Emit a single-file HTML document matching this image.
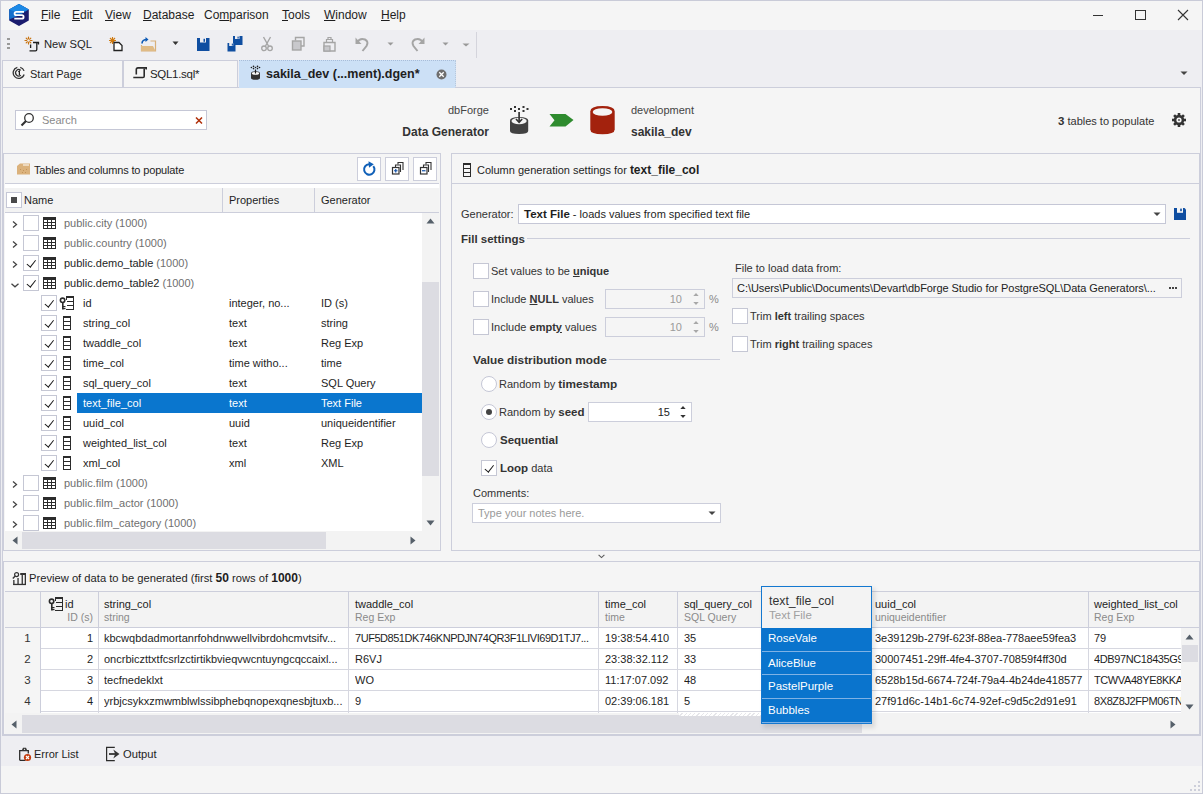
<!DOCTYPE html>
<html><head><meta charset="utf-8">
<style>
*{box-sizing:border-box;margin:0;padding:0}
html,body{width:1203px;height:794px;overflow:hidden;background:#f5f5f5;font-family:"Liberation Sans",sans-serif;font-size:11px;color:#1e1e1e}
.a{position:absolute}
.t{position:absolute;white-space:nowrap;line-height:14px}
.b{font-weight:bold}
.u{text-decoration:underline}
.cb{position:absolute;width:16px;height:16px;border:1px solid #c5c7d4;background:#fff}
.ck::after{content:"";position:absolute;left:5px;top:2px;width:3.5px;height:7.5px;border:solid #1a1a1a;border-width:0 1.3px 1.3px 0;transform:rotate(38deg)}
.hl{position:absolute;background:#ccceDB}
</style></head><body>
<!-- outer frame -->
<div class="a" style="left:0;top:0;width:1203px;height:794px;border:1px solid #c9cbd8"></div>

<!-- TITLE BAR -->
<div id="title" class="a" style="left:1px;top:1px;width:1201px;height:29px;background:#f5f5f5"></div>
<!-- TOOLBAR -->
<div id="toolbar" class="a" style="left:1px;top:30px;width:1201px;height:30px;background:#eeeef2"></div>
<!-- TAB STRIP -->
<div id="tabs" class="a" style="left:1px;top:60px;width:1201px;height:28px;background:#eeeef2"></div>


<!-- logo -->
<svg class="a" style="left:9px;top:4px" width="20" height="22" viewBox="0 0 20 22">
<polygon points="10,0 19.8,5.6 19.8,16.4 10,22 0.2,16.4 0.2,5.6" fill="#1b1c6e"/>
<polygon points="10,0 19.8,5.6 10,11.5 0.2,15.5 0.2,5.6" fill="#1570cc"/>
<polygon points="10,0 19.8,5.6 10,9 0.2,5.6" fill="#1d8ae6"/>
<path d="M15 7.8H7.3Q5.6 7.8 5.6 9.5Q5.6 11.2 7.3 11.2H12.9Q14.6 11.2 14.6 12.9Q14.6 14.6 12.9 14.6H5.3" stroke="#fff" stroke-width="1.8" fill="none"/>
</svg>
<div class="t" style="left:41px;top:8px;font-size:12px;color:#1e1e1e"><span class="u">F</span>ile</div>
<div class="t" style="left:72px;top:8px;font-size:12px"><span class="u">E</span>dit</div>
<div class="t" style="left:105px;top:8px;font-size:12px"><span class="u">V</span>iew</div>
<div class="t" style="left:143px;top:8px;font-size:12px"><span class="u">D</span>atabase</div>
<div class="t" style="left:204px;top:8px;font-size:12px">Co<span class="u">m</span>parison</div>
<div class="t" style="left:282px;top:8px;font-size:12px"><span class="u">T</span>ools</div>
<div class="t" style="left:324px;top:8px;font-size:12px"><span class="u">W</span>indow</div>
<div class="t" style="left:381px;top:8px;font-size:12px"><span class="u">H</span>elp</div>
<!-- window controls -->
<div class="a" style="left:1093px;top:15px;width:10px;height:1px;background:#333"></div>
<div class="a" style="left:1135px;top:10px;width:11px;height:10px;border:1px solid #333"></div>
<svg class="a" style="left:1177px;top:9px" width="12" height="12" viewBox="0 0 12 12"><path d="M1 1L11 11M11 1L1 11" stroke="#333" stroke-width="1.1"/></svg>

<!-- toolbar -->
<div class="a" style="left:7px;top:38px;width:3px;height:2px;background:#999"></div>
<div class="a" style="left:7px;top:43px;width:3px;height:2px;background:#999"></div>
<div class="a" style="left:7px;top:47px;width:3px;height:2px;background:#999"></div>
<svg class="a" style="left:20px;top:32px" width="24" height="24" viewBox="0 0 24 24">
<g stroke="#c8720f" stroke-width="1.2" stroke-linecap="round"><path d="M8.5 5v7M5 8.5h7M6.2 6.2l4.6 4.6M10.8 6.2l-4.6 4.6"/></g><circle cx="8.5" cy="8.5" r="1.3" fill="#eeeef2"/>
<path d="M13 10.5H18.5V12.5M16.8 10.8V17.5Q16.8 18.8 15.5 18.8H9.5M10.6 12.6V16" stroke="#1e1e1e" stroke-width="1.3" fill="none"/>
</svg>
<div class="t" style="left:44px;top:37px;font-size:11.2px">New SQL</div>
<svg class="a" style="left:108px;top:36px" width="16" height="16" viewBox="0 0 16 16">
<g stroke="#d07a10" stroke-width="1.1"><path d="M4.5 1v7M1 4.5h7M2 2l5 5M7 2l-5 5"/></g>
<path d="M6 6.5h5l3 3v5h-8z" stroke="#222" stroke-width="1.3" fill="#fff"/>
</svg>
<svg class="a" style="left:140px;top:36px" width="17" height="16" viewBox="0 0 17 16">
<path d="M1.5 9v6h14v-10h-5" stroke="#d8b07a" stroke-width="1.2" fill="none"/>
<path d="M1 10h12l2.5 5h-14.5z" fill="#e0bb86"/>
<path d="M2 7.5q0-4 5-4" stroke="#0d5ab5" stroke-width="1.6" fill="none"/><path d="M5.5 1l3 2.5l-3 2.5z" fill="#0d5ab5"/>
</svg>
<svg class="a" style="left:172px;top:41px" width="7" height="5"><path d="M0.5 0.5h6l-3 3.5z" fill="#333"/></svg>
<svg class="a" style="left:197px;top:38px" width="13" height="13" viewBox="0 0 13 13"><path d="M0 0h12.5v13h-12.5z" fill="#0f4ea1"/><rect x="3" y="0" width="6" height="4.5" fill="#eeeef2"/><rect x="6.5" y="0.8" width="1.5" height="3" fill="#0f4ea1"/></svg>
<svg class="a" style="left:227px;top:36px" width="16" height="16" viewBox="0 0 16 16"><path d="M6 0h9.5v9h-9.5z" fill="#0f4ea1"/><rect x="8" y="0" width="4.5" height="3" fill="#eeeef2"/><rect x="10.5" y="0.6" width="1.2" height="2" fill="#0f4ea1"/><path d="M0.5 7h8v8.5h-8z" fill="#0f4ea1"/><rect x="2.2" y="7" width="4" height="3" fill="#eeeef2"/><rect x="4.8" y="7.6" width="1.1" height="2" fill="#0f4ea1"/></svg>
<svg class="a" style="left:260px;top:36px" width="15" height="16" viewBox="0 0 15 16"><path d="M3.5 1l5 9M10.5 1l-5 9" stroke="#a5a5a5" stroke-width="1.4" fill="none"/><circle cx="4" cy="12.3" r="2.3" stroke="#a5a5a5" stroke-width="1.3" fill="none"/><circle cx="10" cy="12.3" r="2.3" stroke="#a5a5a5" stroke-width="1.3" fill="none"/></svg>
<svg class="a" style="left:291px;top:36px" width="15" height="16" viewBox="0 0 15 16"><path d="M4.5 4.5v-3h8.5v8.5h-3" stroke="#a5a5a5" stroke-width="1.4" fill="none"/><rect x="1.5" y="5" width="8.5" height="9" stroke="#a5a5a5" stroke-width="1.4" fill="#c8c8cc"/></svg>
<svg class="a" style="left:322px;top:36px" width="15" height="16" viewBox="0 0 15 16"><path d="M2 6.5h11v8.5h-11z" stroke="#a5a5a5" stroke-width="1.4" fill="none"/><path d="M4.5 6.5v-3h6v3M6 3.5v-2h3v2" stroke="#a5a5a5" stroke-width="1.2" fill="none"/><rect x="2" y="10" width="6" height="5" stroke="#a5a5a5" stroke-width="1.2" fill="#c8c8cc"/></svg>
<svg class="a" style="left:355px;top:36px" width="15" height="16" viewBox="0 0 15 16"><path d="M2 6.5q3-5 8-3q4 2 1.5 6.5l-4 5" stroke="#a5a5a5" stroke-width="2" fill="none"/><path d="M0.5 1.5v6.5h6z" fill="#a5a5a5"/></svg>
<svg class="a" style="left:387px;top:42px" width="7" height="4"><path d="M0.5 0.5h6l-3 3z" fill="#999"/></svg>
<svg class="a" style="left:410px;top:36px" width="16" height="16" viewBox="0 0 16 16"><path d="M13 6.5q-3-5-8-3q-4 2-1.5 6.5l4 5" stroke="#a5a5a5" stroke-width="2" fill="none"/><path d="M14.5 1.5v6.5h-6z" fill="#a5a5a5"/></svg>
<svg class="a" style="left:442px;top:42px" width="7" height="4"><path d="M0.5 0.5h6l-3 3z" fill="#999"/></svg>
<svg class="a" style="left:462px;top:43px" width="8" height="4"><path d="M0.5 0.5h7l-3.5 3z" fill="#999"/></svg>
<div class="a" style="left:476px;top:32px;width:1px;height:26px;background:#d4d4dc"></div>

<!-- tabs -->
<div class="a" style="left:2px;top:60px;width:121px;height:28px;background:#f5f5f5;border:1px solid #ccceDB"></div>
<div class="a" style="left:123px;top:60px;width:115px;height:28px;background:#f5f5f5;border:1px solid #ccceDB"></div>
<div class="a" style="left:239px;top:60px;width:217px;height:28px;background:#cce0f6;border-top:1px dotted #a8bcd8;border-right:1px dotted #b8c8dc"></div>
<div class="a" style="left:2px;top:87px;width:1199px;height:1px;background:#ccceDB"></div>
<div class="a" style="left:239px;top:87px;width:216px;height:1px;background:#cce0f6"></div>
<svg class="a" style="left:12px;top:66px" width="14" height="14" viewBox="0 0 14 14"><path d="M8.25 1.39A5.6 5.6 0 0 1 12.06 4.88M12.13 8.53A5.6 5.6 0 1 1 5.35 1.39" stroke="#333" stroke-width="1.3" fill="none"/><path d="M8.86 9.25A3.2 3.2 0 1 1 8.86 4.35" stroke="#333" stroke-width="1.2" fill="none"/><path d="M6.3 5.7L7.4 5V9" stroke="#222" stroke-width="1.2" fill="none"/></svg>
<div class="t" style="left:30px;top:67px;font-size:11px">Start Page</div>
<svg class="a" style="left:132px;top:65px" width="15" height="17" viewBox="0 0 15 17"><path d="M4.3 9.5V4.6Q4.3 2.9 6 2.9H14.3V4.6" stroke="#2b2b2b" stroke-width="1.6" fill="none"/><path d="M12.2 3.5V11.2Q12.2 12.5 10.9 12.5H1.3" stroke="#2b2b2b" stroke-width="1.6" fill="none"/></svg>
<div class="t" style="left:150px;top:67px;font-size:11.5px;letter-spacing:-0.3px">SQL1.sql*</div>
<svg class="a" style="left:249px;top:64px" width="13" height="18" viewBox="0 0 13 18">
<g fill="#1e1e1e"><circle cx="4.5" cy="2.4" r="0.8"/><circle cx="8.5" cy="2.4" r="0.8"/><circle cx="2.4" cy="3.5" r="0.8"/><circle cx="6.5" cy="3.5" r="0.8"/><circle cx="10.5" cy="3.5" r="0.8"/><circle cx="4.5" cy="4.6" r="0.8"/><circle cx="8.5" cy="4.6" r="0.8"/></g>
<path d="M2 9.3Q2 7.3 6.5 7.3Q11 7.3 11 9.3V14Q11 15.8 6.5 15.8Q2 15.8 2 14Z" fill="#333"/>
<ellipse cx="6.5" cy="9.4" rx="3.6" ry="1.3" fill="#fff"/>
<rect x="5.9" y="5.5" width="1.2" height="4" fill="#1e1e1e"/>
</svg>
<div class="t b" style="left:266px;top:67px;font-size:12.5px;color:#1e1e1e">sakila_dev (...ment).dgen*</div>
<svg class="a" style="left:436px;top:69px" width="11" height="11" viewBox="0 0 11 11"><circle cx="5.5" cy="5.5" r="5" fill="#6e6e6e"/><path d="M3.3 3.3l4.4 4.4M7.7 3.3l-4.4 4.4" stroke="#fff" stroke-width="1.3"/></svg>
<svg class="a" style="left:1180px;top:71px" width="8" height="5"><path d="M0.5 0.5h7l-3.5 3.5z" fill="#444"/></svg>

<!-- DOC AREA -->
<div id="doc" class="a" style="left:1px;top:88px;width:1201px;height:648px;background:#eeeef2"></div><div class="a" style="left:2px;top:88px;width:1199px;height:648px;background:#f5f5f5;border:1px solid #ccceDB;border-top:0"></div>



<!-- search -->
<div class="a" style="left:15px;top:110px;width:192px;height:20px;background:#fff;border:1px solid #c5c7d6"></div>
<svg class="a" style="left:20px;top:112px" width="15" height="15" viewBox="0 0 15 15"><circle cx="9" cy="6" r="4.3" fill="none" stroke="#333" stroke-width="1.3"/><path d="M6 9l-4.5 4.5" stroke="#333" stroke-width="2.2"/></svg>
<div class="t" style="left:42px;top:113px;font-size:11px;color:#8a8a8a">Search</div>
<svg class="a" style="left:195px;top:117px" width="8" height="7" viewBox="0 0 8 7"><path d="M1 0.5l6 6M7 0.5l-6 6" stroke="#b0300a" stroke-width="1.5"/></svg>
<!-- center header -->
<div class="t" style="left:448px;top:103px;color:#444;width:40px;text-align:right">dbForge</div>
<div class="t b" style="left:389px;top:125px;color:#333;font-size:12px;width:100px;text-align:right">Data Generator</div>
<svg class="a" style="left:509px;top:104px" width="21" height="32" viewBox="0 0 21 32">
<g fill="#333"><rect x="1" y="4" width="2" height="2"/><rect x="5" y="2" width="2" height="2"/><rect x="13.5" y="2" width="2" height="2"/><rect x="17.5" y="4" width="2" height="2"/><rect x="5" y="6" width="2" height="2"/><rect x="13.5" y="6" width="2" height="2"/><rect x="9" y="4" width="2" height="2"/></g>
<path d="M1 16.5Q1 13 10.2 13Q19.2 13 19.2 16.5V27Q19.2 30 10.2 30Q1 30 1 27Z" fill="#424242"/>
<ellipse cx="10.1" cy="17" rx="7.6" ry="3.2" fill="#f5f5f5"/>
<path d="M10.1 8v10" stroke="#333" stroke-width="1.7"/><path d="M7 15l3.1 3.3l3.1-3.3" stroke="#333" stroke-width="1.6" fill="none"/>
</svg>
<svg class="a" style="left:549px;top:114px" width="25" height="13" viewBox="0 0 25 13"><path d="M0.5 0h16l8 6l-8 6.5h-16l5-6.3z" fill="#2e8b2e"/></svg>
<svg class="a" style="left:590px;top:105px" width="25" height="30" viewBox="0 0 25 30"><path d="M0.3 6.5Q0.3 1 12.5 1Q24.7 1 24.7 6.5V24.5Q24.7 29.3 12.5 29.3Q0.3 29.3 0.3 24.5Z" fill="#a3220d"/><ellipse cx="12.5" cy="7" rx="9.8" ry="3.8" fill="#f5f5f5"/></svg>
<div class="t" style="left:631px;top:103px;color:#444">development</div>
<div class="t b" style="left:631px;top:125px;color:#333;font-size:12px">sakila_dev</div>
<div class="t" style="left:1058px;top:114px;color:#333;font-size:11px"><b style="font-size:11.5px">3</b> tables to populate</div>
<svg class="a" style="left:1171px;top:112px" width="16" height="16" viewBox="0 0 16 16"><g transform="translate(8 8)"><g fill="#333"><rect x="-1.3" y="-7" width="2.6" height="14"/><rect x="-1.3" y="-7" width="2.6" height="14" transform="rotate(45)"/><rect x="-1.3" y="-7" width="2.6" height="14" transform="rotate(90)"/><rect x="-1.3" y="-7" width="2.6" height="14" transform="rotate(135)"/></g><circle r="5.2" fill="#333"/><circle r="2.6" fill="#f5f5f5"/><circle r="1" fill="#555"/></g></svg>

<!-- LEFT PANEL -->
<div class="a" style="left:3px;top:153px;width:438px;height:398px;border:1px solid #ccceDB;background:#f5f5f5"></div>
<svg class="a" style="left:17px;top:163px" width="14" height="12" viewBox="0 0 14 12"><path d="M0 3l3-2.5h10v11h-13z" fill="#dbb27c"/><rect x="6" y="1.5" width="6" height="1" fill="#fff"/><g fill="#c4945a"><rect x="3" y="6" width="1" height="1"/><rect x="6" y="7" width="1" height="1"/><rect x="9" y="6" width="1" height="1"/><rect x="5" y="9" width="1" height="1"/><rect x="8" y="9" width="1" height="1"/></g></svg>
<div class="t" style="left:34px;top:163px;color:#1e1e1e;letter-spacing:-0.15px">Tables and columns to populate</div>
<div class="a" style="left:357px;top:157px;width:24px;height:24px;border:1px solid #ccceDB;background:#fff"></div>
<div class="a" style="left:385px;top:157px;width:24px;height:24px;border:1px solid #ccceDB;background:#fff"></div>
<div class="a" style="left:413px;top:157px;width:24px;height:24px;border:1px solid #ccceDB;background:#fff"></div>
<svg class="a" style="left:361px;top:160px" width="17" height="18" viewBox="0 0 17 18"><path d="M12.3 6.2A5.2 5.2 0 1 1 8 4.3" stroke="#1060b8" stroke-width="2" fill="none"/><path d="M7.5 1.2L12.8 4.2L8 7.8z" fill="#1060b8"/></svg>
<svg class="a" style="left:390px;top:160px" width="15" height="16" viewBox="0 0 15 16"><path d="M5.5 7.5V5H10.5V12" stroke="#333" stroke-width="1.1" fill="none"/><path d="M8 4.5V2.5H13V10" stroke="#333" stroke-width="1.1" fill="none"/><rect x="2.5" y="7.5" width="6.5" height="6.5" fill="#fff" stroke="#333" stroke-width="1.2"/><path d="M5.75 9v3.5M4 10.75h3.5" stroke="#1050a8" stroke-width="1.2"/></svg>
<svg class="a" style="left:418px;top:160px" width="15" height="16" viewBox="0 0 15 16"><path d="M5.5 7.5V5H10.5V12" stroke="#333" stroke-width="1.1" fill="none"/><path d="M8 4.5V2.5H13V10" stroke="#333" stroke-width="1.1" fill="none"/><rect x="2.5" y="7.5" width="6.5" height="6.5" fill="#fff" stroke="#333" stroke-width="1.2"/><path d="M4 10.75h3.5" stroke="#1050a8" stroke-width="1.2"/></svg>
<div class="a" style="left:5px;top:183px;width:434px;height:1px;background:#ccceDB"></div>
<!-- column header -->
<div class="a" style="left:5px;top:184px;width:434px;height:28px;background:#f3f3f3;border-top:4px solid #fff"></div>
<div class="a" style="left:5px;top:212px;width:434px;height:1px;background:#ccceDB"></div>
<div class="a" style="left:6px;top:192px;width:16px;height:16px;border:1px solid #c5c7d6;background:#fff"></div>
<div class="a" style="left:11px;top:197px;width:6px;height:6px;background:#4a4a4a"></div>
<div class="t" style="left:24px;top:193px">Name</div>
<div class="a" style="left:222px;top:188px;width:1px;height:24px;background:#ccceDB"></div>
<div class="t" style="left:229px;top:193px">Properties</div>
<div class="a" style="left:314px;top:188px;width:1px;height:24px;background:#ccceDB"></div>
<div class="t" style="left:321px;top:193px">Generator</div>
<!-- tree body -->
<div class="a" style="left:5px;top:213px;width:417px;height:318px;background:#fff"></div>
<svg class="a" style="left:12px;top:221px" width="6" height="7" viewBox="0 0 6 7"><path d="M1 0.5l3.5 3l-3.5 3" stroke="#444" stroke-width="1.3" fill="none"/></svg>
<div class="cb" style="left:23px;top:215px"></div>
<svg class="a" style="left:43px;top:217px" width="13" height="12" viewBox="0 0 13 12"><rect width="13" height="12" fill="#2b2b2b"/><g fill="#fff"><rect x="1" y="3" width="3" height="2"/><rect x="5" y="3" width="3" height="2"/><rect x="9" y="3" width="3" height="2"/><rect x="1" y="6" width="3" height="2"/><rect x="5" y="6" width="3" height="2"/><rect x="9" y="6" width="3" height="2"/><rect x="1" y="9" width="3" height="2"/><rect x="5" y="9" width="3" height="2"/><rect x="9" y="9" width="3" height="2"/></g></svg>
<div class="t" style="left:64px;top:216px;color:#6f6f6f">public.city <span style="color:#6f6f6f">(1000)</span></div>
<svg class="a" style="left:12px;top:241px" width="6" height="7" viewBox="0 0 6 7"><path d="M1 0.5l3.5 3l-3.5 3" stroke="#444" stroke-width="1.3" fill="none"/></svg>
<div class="cb" style="left:23px;top:235px"></div>
<svg class="a" style="left:43px;top:237px" width="13" height="12" viewBox="0 0 13 12"><rect width="13" height="12" fill="#2b2b2b"/><g fill="#fff"><rect x="1" y="3" width="3" height="2"/><rect x="5" y="3" width="3" height="2"/><rect x="9" y="3" width="3" height="2"/><rect x="1" y="6" width="3" height="2"/><rect x="5" y="6" width="3" height="2"/><rect x="9" y="6" width="3" height="2"/><rect x="1" y="9" width="3" height="2"/><rect x="5" y="9" width="3" height="2"/><rect x="9" y="9" width="3" height="2"/></g></svg>
<div class="t" style="left:64px;top:236px;color:#6f6f6f">public.country <span style="color:#6f6f6f">(1000)</span></div>
<svg class="a" style="left:12px;top:261px" width="6" height="7" viewBox="0 0 6 7"><path d="M1 0.5l3.5 3l-3.5 3" stroke="#444" stroke-width="1.3" fill="none"/></svg>
<div class="cb ck" style="left:23px;top:255px"></div>
<svg class="a" style="left:43px;top:257px" width="13" height="12" viewBox="0 0 13 12"><rect width="13" height="12" fill="#2b2b2b"/><g fill="#fff"><rect x="1" y="3" width="3" height="2"/><rect x="5" y="3" width="3" height="2"/><rect x="9" y="3" width="3" height="2"/><rect x="1" y="6" width="3" height="2"/><rect x="5" y="6" width="3" height="2"/><rect x="9" y="6" width="3" height="2"/><rect x="1" y="9" width="3" height="2"/><rect x="5" y="9" width="3" height="2"/><rect x="9" y="9" width="3" height="2"/></g></svg>
<div class="t" style="left:64px;top:256px;color:#1e1e1e">public.demo_table <span style="color:#6f6f6f">(1000)</span></div>
<svg class="a" style="left:11px;top:283px" width="8" height="5" viewBox="0 0 8 5"><path d="M0.5 0.8l3.5 3l3.5-3" stroke="#444" stroke-width="1.3" fill="none"/></svg>
<div class="cb ck" style="left:23px;top:275px"></div>
<svg class="a" style="left:43px;top:277px" width="13" height="12" viewBox="0 0 13 12"><rect width="13" height="12" fill="#2b2b2b"/><g fill="#fff"><rect x="1" y="3" width="3" height="2"/><rect x="5" y="3" width="3" height="2"/><rect x="9" y="3" width="3" height="2"/><rect x="1" y="6" width="3" height="2"/><rect x="5" y="6" width="3" height="2"/><rect x="9" y="6" width="3" height="2"/><rect x="1" y="9" width="3" height="2"/><rect x="5" y="9" width="3" height="2"/><rect x="9" y="9" width="3" height="2"/></g></svg>
<div class="t" style="left:64px;top:276px;color:#1e1e1e">public.demo_table2 <span style="color:#6f6f6f">(1000)</span></div>
<div class="cb ck" style="left:41px;top:295px"></div>
<svg class="a" style="left:59px;top:296px" width="15" height="14" viewBox="0 0 15 14"><g fill="#2b2b2b"><rect x="7" y="0" width="8" height="2"/><rect x="14" y="0" width="1" height="14"/><rect x="7" y="13" width="8" height="1"/><rect x="8" y="5" width="7" height="1"/><rect x="8" y="9" width="7" height="1"/><rect x="7" y="0" width="1" height="4"/><rect x="3" y="6.5" width="1.6" height="7"/><rect x="4" y="10" width="2.5" height="1.2"/><rect x="4" y="12" width="2.5" height="1.2"/></g><circle cx="3.6" cy="4.3" r="2.2" fill="none" stroke="#2b2b2b" stroke-width="1.6"/></svg>
<div class="t" style="left:83px;top:296px;color:#1e1e1e">id</div>
<div class="t" style="left:229px;top:296px;color:#1e1e1e">integer, no...</div>
<div class="t" style="left:321px;top:296px;color:#1e1e1e">ID (s)</div>
<div class="cb ck" style="left:41px;top:315px"></div>
<svg class="a" style="left:63px;top:316px" width="8" height="14" viewBox="0 0 8 14"><g fill="#2b2b2b"><rect x="0" y="0" width="8" height="2"/><rect x="0" y="0" width="1" height="14"/><rect x="7" y="0" width="1" height="14"/><rect x="0" y="13" width="8" height="1"/><rect x="0" y="5" width="8" height="1"/><rect x="0" y="9" width="8" height="1"/></g></svg>
<div class="t" style="left:83px;top:316px;color:#1e1e1e">string_col</div>
<div class="t" style="left:229px;top:316px;color:#1e1e1e">text</div>
<div class="t" style="left:321px;top:316px;color:#1e1e1e">string</div>
<div class="cb ck" style="left:41px;top:335px"></div>
<svg class="a" style="left:63px;top:336px" width="8" height="14" viewBox="0 0 8 14"><g fill="#2b2b2b"><rect x="0" y="0" width="8" height="2"/><rect x="0" y="0" width="1" height="14"/><rect x="7" y="0" width="1" height="14"/><rect x="0" y="13" width="8" height="1"/><rect x="0" y="5" width="8" height="1"/><rect x="0" y="9" width="8" height="1"/></g></svg>
<div class="t" style="left:83px;top:336px;color:#1e1e1e">twaddle_col</div>
<div class="t" style="left:229px;top:336px;color:#1e1e1e">text</div>
<div class="t" style="left:321px;top:336px;color:#1e1e1e">Reg Exp</div>
<div class="cb ck" style="left:41px;top:355px"></div>
<svg class="a" style="left:63px;top:356px" width="8" height="14" viewBox="0 0 8 14"><g fill="#2b2b2b"><rect x="0" y="0" width="8" height="2"/><rect x="0" y="0" width="1" height="14"/><rect x="7" y="0" width="1" height="14"/><rect x="0" y="13" width="8" height="1"/><rect x="0" y="5" width="8" height="1"/><rect x="0" y="9" width="8" height="1"/></g></svg>
<div class="t" style="left:83px;top:356px;color:#1e1e1e">time_col</div>
<div class="t" style="left:229px;top:356px;color:#1e1e1e">time witho...</div>
<div class="t" style="left:321px;top:356px;color:#1e1e1e">time</div>
<div class="cb ck" style="left:41px;top:375px"></div>
<svg class="a" style="left:63px;top:376px" width="8" height="14" viewBox="0 0 8 14"><g fill="#2b2b2b"><rect x="0" y="0" width="8" height="2"/><rect x="0" y="0" width="1" height="14"/><rect x="7" y="0" width="1" height="14"/><rect x="0" y="13" width="8" height="1"/><rect x="0" y="5" width="8" height="1"/><rect x="0" y="9" width="8" height="1"/></g></svg>
<div class="t" style="left:83px;top:376px;color:#1e1e1e">sql_query_col</div>
<div class="t" style="left:229px;top:376px;color:#1e1e1e">text</div>
<div class="t" style="left:321px;top:376px;color:#1e1e1e">SQL Query</div>
<div class="cb ck" style="left:41px;top:395px"></div>
<svg class="a" style="left:63px;top:396px" width="8" height="14" viewBox="0 0 8 14"><g fill="#2b2b2b"><rect x="0" y="0" width="8" height="2"/><rect x="0" y="0" width="1" height="14"/><rect x="7" y="0" width="1" height="14"/><rect x="0" y="13" width="8" height="1"/><rect x="0" y="5" width="8" height="1"/><rect x="0" y="9" width="8" height="1"/></g></svg>
<div class="a" style="left:77px;top:393px;width:345px;height:20px;background:#0a76ce"></div>
<div class="t" style="left:83px;top:396px;color:#fff">text_file_col</div>
<div class="t" style="left:229px;top:396px;color:#fff">text</div>
<div class="t" style="left:321px;top:396px;color:#fff">Text File</div>
<div class="cb ck" style="left:41px;top:415px"></div>
<svg class="a" style="left:63px;top:416px" width="8" height="14" viewBox="0 0 8 14"><g fill="#2b2b2b"><rect x="0" y="0" width="8" height="2"/><rect x="0" y="0" width="1" height="14"/><rect x="7" y="0" width="1" height="14"/><rect x="0" y="13" width="8" height="1"/><rect x="0" y="5" width="8" height="1"/><rect x="0" y="9" width="8" height="1"/></g></svg>
<div class="t" style="left:83px;top:416px;color:#1e1e1e">uuid_col</div>
<div class="t" style="left:229px;top:416px;color:#1e1e1e">uuid</div>
<div class="t" style="left:321px;top:416px;color:#1e1e1e">uniqueidentifier</div>
<div class="cb ck" style="left:41px;top:435px"></div>
<svg class="a" style="left:63px;top:436px" width="8" height="14" viewBox="0 0 8 14"><g fill="#2b2b2b"><rect x="0" y="0" width="8" height="2"/><rect x="0" y="0" width="1" height="14"/><rect x="7" y="0" width="1" height="14"/><rect x="0" y="13" width="8" height="1"/><rect x="0" y="5" width="8" height="1"/><rect x="0" y="9" width="8" height="1"/></g></svg>
<div class="t" style="left:83px;top:436px;color:#1e1e1e">weighted_list_col</div>
<div class="t" style="left:229px;top:436px;color:#1e1e1e">text</div>
<div class="t" style="left:321px;top:436px;color:#1e1e1e">Reg Exp</div>
<div class="cb ck" style="left:41px;top:455px"></div>
<svg class="a" style="left:63px;top:456px" width="8" height="14" viewBox="0 0 8 14"><g fill="#2b2b2b"><rect x="0" y="0" width="8" height="2"/><rect x="0" y="0" width="1" height="14"/><rect x="7" y="0" width="1" height="14"/><rect x="0" y="13" width="8" height="1"/><rect x="0" y="5" width="8" height="1"/><rect x="0" y="9" width="8" height="1"/></g></svg>
<div class="t" style="left:83px;top:456px;color:#1e1e1e">xml_col</div>
<div class="t" style="left:229px;top:456px;color:#1e1e1e">xml</div>
<div class="t" style="left:321px;top:456px;color:#1e1e1e">XML</div>
<svg class="a" style="left:12px;top:481px" width="6" height="7" viewBox="0 0 6 7"><path d="M1 0.5l3.5 3l-3.5 3" stroke="#444" stroke-width="1.3" fill="none"/></svg>
<div class="cb" style="left:23px;top:475px"></div>
<svg class="a" style="left:43px;top:477px" width="13" height="12" viewBox="0 0 13 12"><rect width="13" height="12" fill="#2b2b2b"/><g fill="#fff"><rect x="1" y="3" width="3" height="2"/><rect x="5" y="3" width="3" height="2"/><rect x="9" y="3" width="3" height="2"/><rect x="1" y="6" width="3" height="2"/><rect x="5" y="6" width="3" height="2"/><rect x="9" y="6" width="3" height="2"/><rect x="1" y="9" width="3" height="2"/><rect x="5" y="9" width="3" height="2"/><rect x="9" y="9" width="3" height="2"/></g></svg>
<div class="t" style="left:64px;top:476px;color:#6f6f6f">public.film <span style="color:#6f6f6f">(1000)</span></div>
<svg class="a" style="left:12px;top:501px" width="6" height="7" viewBox="0 0 6 7"><path d="M1 0.5l3.5 3l-3.5 3" stroke="#444" stroke-width="1.3" fill="none"/></svg>
<div class="cb" style="left:23px;top:495px"></div>
<svg class="a" style="left:43px;top:497px" width="13" height="12" viewBox="0 0 13 12"><rect width="13" height="12" fill="#2b2b2b"/><g fill="#fff"><rect x="1" y="3" width="3" height="2"/><rect x="5" y="3" width="3" height="2"/><rect x="9" y="3" width="3" height="2"/><rect x="1" y="6" width="3" height="2"/><rect x="5" y="6" width="3" height="2"/><rect x="9" y="6" width="3" height="2"/><rect x="1" y="9" width="3" height="2"/><rect x="5" y="9" width="3" height="2"/><rect x="9" y="9" width="3" height="2"/></g></svg>
<div class="t" style="left:64px;top:496px;color:#6f6f6f">public.film_actor <span style="color:#6f6f6f">(1000)</span></div>
<svg class="a" style="left:12px;top:521px" width="6" height="7" viewBox="0 0 6 7"><path d="M1 0.5l3.5 3l-3.5 3" stroke="#444" stroke-width="1.3" fill="none"/></svg>
<div class="cb" style="left:23px;top:515px"></div>
<svg class="a" style="left:43px;top:517px" width="13" height="12" viewBox="0 0 13 12"><rect width="13" height="12" fill="#2b2b2b"/><g fill="#fff"><rect x="1" y="3" width="3" height="2"/><rect x="5" y="3" width="3" height="2"/><rect x="9" y="3" width="3" height="2"/><rect x="1" y="6" width="3" height="2"/><rect x="5" y="6" width="3" height="2"/><rect x="9" y="6" width="3" height="2"/><rect x="1" y="9" width="3" height="2"/><rect x="5" y="9" width="3" height="2"/><rect x="9" y="9" width="3" height="2"/></g></svg>
<div class="t" style="left:64px;top:516px;color:#6f6f6f">public.film_category <span style="color:#6f6f6f">(1000)</span></div>
<!-- v scroll -->
<div class="a" style="left:422px;top:213px;width:17px;height:318px;background:#f3f3f3"></div>
<svg class="a" style="left:426px;top:218px" width="9" height="6"><path d="M0.5 5.5l4-5l4 5z" fill="#56606a"/></svg>
<div class="a" style="left:422px;top:282px;width:17px;height:194px;background:#dcdce2"></div>
<svg class="a" style="left:426px;top:520px" width="9" height="6"><path d="M0.5 0.5l4 5l4-5z" fill="#56606a"/></svg>
<!-- h scroll -->
<div class="a" style="left:5px;top:531px;width:434px;height:19px;background:#f3f3f3"></div>
<svg class="a" style="left:12px;top:536px" width="6" height="9"><path d="M5.5 0.5l-5 4l5 4z" fill="#56606a"/></svg>
<div class="a" style="left:22px;top:532px;width:304px;height:17px;background:#dcdce2"></div>
<svg class="a" style="left:410px;top:536px" width="6" height="9"><path d="M0.5 0.5l5 4l-5 4z" fill="#56606a"/></svg>


<!-- RIGHT PANEL -->
<div class="a" style="left:451px;top:153px;width:749px;height:398px;border:1px solid #ccceDB;background:#f5f5f5"></div>
<svg class="a" style="left:463px;top:163px" width="8" height="14" viewBox="0 0 8 14"><g fill="#2b2b2b"><rect x="0" y="0" width="8" height="2"/><rect x="0" y="0" width="1" height="14"/><rect x="7" y="0" width="1" height="14"/><rect x="0" y="13" width="8" height="1"/><rect x="0" y="5" width="8" height="1"/><rect x="0" y="9" width="8" height="1"/></g></svg>
<div class="t" style="left:477px;top:163px">Column generation settings for <b style="font-size:12px">text_file_col</b></div>
<div class="a" style="left:452px;top:183px;width:747px;height:1px;background:#ccceDB"></div>
<div class="t" style="left:461px;top:207px;color:#333">Generator:</div>
<div class="a" style="left:518px;top:204px;width:648px;height:20px;background:#fff;border:1px solid #c5c7d6"></div>
<div class="t" style="left:524px;top:207px"><b style="font-size:11.5px">Text File</b> - loads values from specified text file</div>
<svg class="a" style="left:1153px;top:212px" width="8" height="5"><path d="M0.5 0.5h7l-3.5 3.5z" fill="#444"/></svg>
<svg class="a" style="left:1174px;top:208px" width="12" height="12" viewBox="0 0 12 12"><path d="M0 0H10.5L12 1.5V12H0z" fill="#0f4ea1"/><rect x="3" y="0" width="6" height="4.8" fill="#f5f5f5"/><rect x="6.2" y="0.6" width="1.6" height="2.6" fill="#0f4ea1"/></svg>
<div class="t b" style="left:461px;top:232px;color:#333;font-size:11.5px">Fill settings</div>
<div class="a" style="left:527px;top:238px;width:663px;height:1px;background:#ccceDB"></div>

<div class="cb" style="left:473px;top:263px"></div>
<div class="t" style="left:491px;top:264px;color:#333">Set values to be <b><span class="u">u</span>nique</b></div>
<div class="cb" style="left:473px;top:291px"></div>
<div class="t" style="left:491px;top:292px;color:#333">Include <b class="u">N</b><b>ULL</b> values</div>
<div class="cb" style="left:473px;top:319px"></div>
<div class="t" style="left:491px;top:320px;color:#333">Include <b>empt<span class="u">y</span></b> values</div>
<div class="a" style="left:605px;top:289px;width:100px;height:20px;border:1px solid #ccceDB"></div>
<div class="t" style="left:640px;top:292px;width:42px;text-align:right;color:#9a9a9a">10</div>
<svg class="a" style="left:693px;top:292px" width="6" height="14"><path d="M0.3 4L3 1L5.7 4z M0.3 10L3 13L5.7 10z" fill="#a8a8a8"/></svg>
<div class="t" style="left:709px;top:292px;color:#8a8a8a">%</div>
<div class="a" style="left:605px;top:317px;width:100px;height:20px;border:1px solid #ccceDB"></div>
<div class="t" style="left:640px;top:320px;width:42px;text-align:right;color:#9a9a9a">10</div>
<svg class="a" style="left:693px;top:320px" width="6" height="14"><path d="M0.3 4L3 1L5.7 4z M0.3 10L3 13L5.7 10z" fill="#a8a8a8"/></svg>
<div class="t" style="left:709px;top:320px;color:#8a8a8a">%</div>

<div class="t" style="left:735px;top:261px;color:#333">File to load data from:</div>
<div class="a" style="left:732px;top:278px;width:450px;height:20px;background:#f5f5f5;border:1px solid #ccceDB"></div>
<div class="t" style="left:737px;top:281px;color:#222;font-size:11px;letter-spacing:-0.06px">C:\Users\Public\Documents\Devart\dbForge Studio for PostgreSQL\Data Generators\...</div>
<div class="a" style="left:1169px;top:287px;width:2px;height:2px;background:#444"></div><div class="a" style="left:1172px;top:287px;width:2px;height:2px;background:#444"></div><div class="a" style="left:1175px;top:287px;width:2px;height:2px;background:#444"></div>
<div class="cb" style="left:732px;top:308px"></div>
<div class="t" style="left:750px;top:309px;color:#333">Trim <b>left</b> trailing spaces</div>
<div class="cb" style="left:732px;top:336px"></div>
<div class="t" style="left:750px;top:337px;color:#333">Trim <b>right</b> trailing spaces</div>

<div class="t b" style="left:473px;top:353px;color:#333;font-size:11.8px">Value distribution mode</div>
<div class="a" style="left:609px;top:359px;width:111px;height:1px;background:#ccceDB"></div>
<div class="a" style="left:481px;top:376px;width:16px;height:16px;border-radius:50%;border:1px solid #c5c7d6;background:#fff"></div>
<div class="t" style="left:499px;top:377px;color:#333">Random by <b style="font-size:11.8px">timestamp</b></div>
<div class="a" style="left:481px;top:404px;width:16px;height:16px;border-radius:50%;border:1px solid #c5c7d6;background:#fff"></div>
<div class="a" style="left:486px;top:409px;width:6px;height:6px;border-radius:50%;background:#444"></div>
<div class="t" style="left:499px;top:405px;color:#333">Random by <b style="font-size:11.5px">seed</b></div>
<div class="a" style="left:588px;top:402px;width:104px;height:20px;background:#fff;border:1px solid #ccceDB"></div>
<div class="t" style="left:630px;top:405px;width:40px;text-align:right;color:#222">15</div>
<svg class="a" style="left:680px;top:405px" width="6" height="14"><path d="M0.3 4L3 1L5.7 4z M0.3 10L3 13L5.7 10z" fill="#333"/></svg>
<div class="a" style="left:481px;top:432px;width:16px;height:16px;border-radius:50%;border:1px solid #c5c7d6;background:#fff"></div>
<div class="t b" style="left:500px;top:433px;color:#333;font-size:11.5px">Sequential</div>
<div class="cb ck" style="left:481px;top:460px"></div>
<div class="t" style="left:500px;top:461px;color:#333"><b style="font-size:11.5px">Loop</b> data</div>
<div class="t" style="left:473px;top:486px;color:#333">Comments:</div>
<div class="a" style="left:472px;top:503px;width:249px;height:20px;background:#fff;border:1px solid #ccceDB"></div>
<div class="t" style="left:478px;top:506px;color:#9a9a9a">Type your notes here.</div>
<svg class="a" style="left:708px;top:511px" width="8" height="5"><path d="M0.5 0.5h7l-3.5 3.5z" fill="#444"/></svg>
<!-- splitter -->
<svg class="a" style="left:598px;top:554px" width="7" height="5"><path d="M0.6 0.8l2.9 2.8l2.9-2.8" stroke="#5a5a5a" stroke-width="1.1" fill="none"/></svg>


<!-- PREVIEW PANEL -->
<div class="a" style="left:3px;top:561px;width:1197px;height:174px;border:1px solid #ccceDB;background:#f5f5f5"></div>
<svg class="a" style="left:12px;top:572px" width="15" height="14" viewBox="0 0 15 14"><g fill="#333"><rect x="8.2" y="1" width="5.8" height="2"/><rect x="1.2" y="8" width="1.3" height="5"/><rect x="5.4" y="6" width="1.3" height="7"/><rect x="9.6" y="3" width="1.3" height="10"/><rect x="12.7" y="1" width="1.3" height="12"/><rect x="1.2" y="11.8" width="12.8" height="1.3"/></g><circle cx="4.6" cy="2.6" r="2" fill="none" stroke="#333" stroke-width="1.2"/><path d="M3.2 4.1L0.8 6.5" stroke="#333" stroke-width="1.4"/></svg>
<div class="t" style="left:29px;top:571px;color:#1e1e1e;font-size:11.2px">Preview of data to be generated (first <b style="font-size:12px">50</b> rows of <b style="font-size:12px">1000</b>)</div>
<div class="a" style="left:5px;top:591px;width:1194px;height:1px;background:#ccceDB"></div>
<!-- grid -->
<div class="a" style="left:5px;top:592px;width:1194px;height:36px;background:#f3f3f3"></div>
<div class="a" style="left:5px;top:627px;width:1194px;height:1px;background:#ccceDB"></div>
<div class="a" style="left:40px;top:628px;width:1141px;height:85px;background:#fff"></div>
<div class="a" style="left:5px;top:628px;width:35px;height:85px;background:#f5f5f5"></div>
<div class="a" style="left:40px;top:592px;width:1px;height:36px;background:#ccceDB"></div>
<svg class="a" style="left:48px;top:597px" width="15" height="14" viewBox="0 0 15 14"><g fill="#2b2b2b"><rect x="7" y="0" width="8" height="2"/><rect x="14" y="0" width="1" height="14"/><rect x="7" y="13" width="8" height="1"/><rect x="8" y="5" width="7" height="1"/><rect x="8" y="9" width="7" height="1"/><rect x="7" y="0" width="1" height="4"/><rect x="3" y="6.5" width="1.6" height="7"/><rect x="4" y="10" width="2.5" height="1.2"/><rect x="4" y="12" width="2.5" height="1.2"/></g><circle cx="3.6" cy="4.3" r="2.2" fill="none" stroke="#2b2b2b" stroke-width="1.6"/></svg>
<div class="t" style="left:65px;top:597px">id</div>
<div class="t" style="left:55px;top:610px;width:38px;text-align:right;color:#8a8a8a;font-size:10.5px">ID (s)</div>
<div class="a" style="left:98px;top:592px;width:1px;height:36px;background:#ccceDB"></div>
<div class="t" style="left:104px;top:597px">string_col</div>
<div class="t" style="left:104px;top:610px;color:#8a8a8a;font-size:10.5px">string</div>
<div class="a" style="left:348px;top:592px;width:1px;height:36px;background:#ccceDB"></div>
<div class="t" style="left:355px;top:597px">twaddle_col</div>
<div class="t" style="left:355px;top:610px;color:#8a8a8a;font-size:10.5px">Reg Exp</div>
<div class="a" style="left:598px;top:592px;width:1px;height:36px;background:#ccceDB"></div>
<div class="t" style="left:605px;top:597px">time_col</div>
<div class="t" style="left:605px;top:610px;color:#8a8a8a;font-size:10.5px">time</div>
<div class="a" style="left:677px;top:592px;width:1px;height:36px;background:#ccceDB"></div>
<div class="t" style="left:684px;top:597px">sql_query_col</div>
<div class="t" style="left:684px;top:610px;color:#8a8a8a;font-size:10.5px">SQL Query</div>
<div class="a" style="left:871px;top:592px;width:1px;height:36px;background:#ccceDB"></div>
<div class="t" style="left:875px;top:597px">uuid_col</div>
<div class="t" style="left:875px;top:610px;color:#8a8a8a;font-size:10.5px">uniqueidentifier</div>
<div class="a" style="left:1088px;top:592px;width:1px;height:36px;background:#ccceDB"></div>
<div class="t" style="left:1094px;top:597px">weighted_list_col</div>
<div class="t" style="left:1094px;top:610px;color:#8a8a8a;font-size:10.5px">Reg Exp</div>
<div class="a" style="left:1088px;top:592px;width:1px;height:36px;background:#ccceDB"></div>
<div class="t" style="left:10px;top:631px;width:35px;text-align:center;color:#333;font-size:11.5px">1</div>
<div class="t" style="left:40px;top:631px;width:53px;text-align:right">1</div>
<div class="t" style="left:104px;top:631px;width:245px;overflow:hidden">kbcwqbdadmortanrfohdnwwellvibrdohcmvtsifv...</div>
<div class="t" style="left:355px;top:631px;width:243px;overflow:hidden;letter-spacing:-0.46px">7UF5D851DK746KNPDJN74QR3F1LIVI69D1TJ7...</div>
<div class="t" style="left:605px;top:631px;width:74px;overflow:hidden">19:38:54.410</div>
<div class="t" style="left:684px;top:631px;width:78px;overflow:hidden">35</div>
<div class="t" style="left:875px;top:631px;width:211px;overflow:hidden">3e39129b-279f-623f-88ea-778aee59fea3</div>
<div class="t" style="left:1094px;top:631px;width:87px;overflow:hidden">79</div>
<div class="a" style="left:40px;top:648px;width:1141px;height:1px;background:#d6d7e0"></div>
<div class="t" style="left:10px;top:652px;width:35px;text-align:center;color:#333;font-size:11.5px">2</div>
<div class="t" style="left:40px;top:652px;width:53px;text-align:right">2</div>
<div class="t" style="left:104px;top:652px;width:245px;overflow:hidden">oncrbiczttxtfcsrlzctirtikbvieqvwcntuyngcqccaixl...</div>
<div class="t" style="left:355px;top:652px;width:243px;overflow:hidden">R6VJ</div>
<div class="t" style="left:605px;top:652px;width:74px;overflow:hidden">23:38:32.112</div>
<div class="t" style="left:684px;top:652px;width:78px;overflow:hidden">33</div>
<div class="t" style="left:875px;top:652px;width:211px;overflow:hidden">30007451-29ff-4fe4-3707-70859f4ff30d</div>
<div class="t" style="left:1094px;top:652px;width:87px;overflow:hidden;letter-spacing:-0.4px">4DB97NC18435G9</div>
<div class="a" style="left:40px;top:669px;width:1141px;height:1px;background:#d6d7e0"></div>
<div class="t" style="left:10px;top:673px;width:35px;text-align:center;color:#333;font-size:11.5px">3</div>
<div class="t" style="left:40px;top:673px;width:53px;text-align:right">3</div>
<div class="t" style="left:104px;top:673px;width:245px;overflow:hidden">tecfnedeklxt</div>
<div class="t" style="left:355px;top:673px;width:243px;overflow:hidden">WO</div>
<div class="t" style="left:605px;top:673px;width:74px;overflow:hidden">11:17:07.092</div>
<div class="t" style="left:684px;top:673px;width:78px;overflow:hidden">48</div>
<div class="t" style="left:875px;top:673px;width:211px;overflow:hidden">6528b15d-6674-724f-79a4-4b24de418577</div>
<div class="t" style="left:1094px;top:673px;width:87px;overflow:hidden;letter-spacing:-0.4px">TCWVA48YE8KKA(</div>
<div class="a" style="left:40px;top:690px;width:1141px;height:1px;background:#d6d7e0"></div>
<div class="t" style="left:10px;top:694px;width:35px;text-align:center;color:#333;font-size:11.5px">4</div>
<div class="t" style="left:40px;top:694px;width:53px;text-align:right">4</div>
<div class="t" style="left:104px;top:694px;width:245px;overflow:hidden">yrbjcsykxzmwmblwlssibphebqnopexqnesbjtuxb...</div>
<div class="t" style="left:355px;top:694px;width:243px;overflow:hidden">9</div>
<div class="t" style="left:605px;top:694px;width:74px;overflow:hidden">02:39:06.181</div>
<div class="t" style="left:684px;top:694px;width:78px;overflow:hidden">5</div>
<div class="t" style="left:875px;top:694px;width:211px;overflow:hidden">27f91d6c-14b1-6c74-92ef-c9d5c2d91e91</div>
<div class="t" style="left:1094px;top:694px;width:87px;overflow:hidden;letter-spacing:-0.4px">8X8Z8J2FPM06TN</div>
<div class="a" style="left:40px;top:711px;width:1141px;height:1px;background:#d6d7e0"></div>
<!-- column dividers in body -->
<div class="a" style="left:40px;top:628px;width:1px;height:85px;background:#ccceDB"></div>
<div class="a" style="left:98px;top:628px;width:1px;height:85px;background:#d6d7e0"></div>
<div class="a" style="left:348px;top:628px;width:1px;height:85px;background:#d6d7e0"></div>
<div class="a" style="left:598px;top:628px;width:1px;height:85px;background:#d6d7e0"></div>
<div class="a" style="left:677px;top:628px;width:1px;height:85px;background:#d6d7e0"></div>
<div class="a" style="left:1088px;top:628px;width:1px;height:85px;background:#d6d7e0"></div>
<!-- v scroll -->
<div class="a" style="left:1181px;top:628px;width:18px;height:85px;background:#f3f3f3"></div>
<svg class="a" style="left:1185px;top:634px" width="9" height="6"><path d="M0.5 5.5l4-5l4 5z" fill="#56606a"/></svg>
<div class="a" style="left:1182px;top:645px;width:16px;height:17px;background:#dcdce2"></div>
<svg class="a" style="left:1185px;top:704px" width="9" height="6"><path d="M0.5 0.5l4 5l4-5z" fill="#56606a"/></svg>
<!-- h scroll -->
<div class="a" style="left:5px;top:713px;width:1194px;height:21px;background:#f3f3f3"></div>
<svg class="a" style="left:11px;top:720px" width="6" height="9"><path d="M5.5 0.5l-5 4l5 4z" fill="#56606a"/></svg>
<div class="a" style="left:22px;top:715px;width:840px;height:18px;background:#dcdce2"></div>
<svg class="a" style="left:1170px;top:720px" width="6" height="9"><path d="M0.5 0.5l5 4l-5 4z" fill="#56606a"/></svg>
<div class="a" style="left:679px;top:713px;width:83px;height:3px;background:repeating-linear-gradient(135deg,#fff 0 2px,#e6e6ea 2px 3px)"></div>
<!-- popup dragged column -->
<div class="a" style="left:763px;top:588px;width:112px;height:140px;background:rgba(0,0,0,0.10);filter:blur(2px)"></div>
<div class="a" style="left:761px;top:586px;width:111px;height:138px;border:1px solid #1478d0;background:#0a74cd"></div>
<div class="a" style="left:762px;top:587px;width:109px;height:41px;background:#f3f3f3"></div>
<div class="t" style="left:769px;top:594px;color:#333;font-size:12.3px">text_file_col</div>
<div class="t" style="left:769px;top:608px;color:#a0a0a0;font-size:11.5px">Text File</div>
<div class="a" style="left:762px;top:651px;width:109px;height:1px;background:#7fb2e5"></div>
<div class="a" style="left:762px;top:674px;width:109px;height:1px;background:#7fb2e5"></div>
<div class="a" style="left:762px;top:698px;width:109px;height:1px;background:#7fb2e5"></div>
<div class="a" style="left:762px;top:722px;width:109px;height:1px;background:#7fb2e5"></div>
<div class="t" style="left:768px;top:631px;color:#fff;font-size:11.5px">RoseVale</div>
<div class="t" style="left:768px;top:656px;color:#fff;font-size:11.5px">AliceBlue</div>
<div class="t" style="left:768px;top:679px;color:#fff;font-size:11.5px">PastelPurple</div>
<div class="t" style="left:768px;top:703px;color:#fff;font-size:11.5px">Bubbles</div>

<!-- bottom tabs content -->

<!-- BOTTOM TABS -->
<div id="btabs" class="a" style="left:1px;top:736px;width:1201px;height:30px;background:#eeeef2"></div>
<!-- STATUS -->
<div id="status" class="a" style="left:1px;top:766px;width:1201px;height:27px;background:#f5f5f5"></div>


<svg class="a" style="left:18px;top:746px" width="15" height="16" viewBox="0 0 15 16"><path d="M1.7 14.3V4.6H10.3V7.5M1.7 14.3H7.5" stroke="#2b2b2b" stroke-width="1.3" fill="none"/><path d="M3.5 5L5 1.8H8L9.5 5z" fill="#333"/><rect x="5.9" y="2.8" width="1.2" height="1.2" fill="#ddd"/><circle cx="9.5" cy="11.5" r="3.6" fill="#c23a0c"/><path d="M8 10l3 3M11 10l-3 3" stroke="#fff" stroke-width="1.2"/></svg>
<div class="t" style="left:34px;top:747px;color:#1e1e1e;font-size:11px">Error List</div>
<svg class="a" style="left:105px;top:746px" width="16" height="16" viewBox="0 0 16 16"><path d="M9.8 1.4H1.6V14.6H9.8" stroke="#2b2b2b" stroke-width="1.2" fill="none"/><path d="M4 8H11" stroke="#333" stroke-width="1.8"/><path d="M8.3 3.4L14.5 8L8.3 12.6L10.2 8z" fill="#333"/></svg>
<div class="t" style="left:123px;top:747px;color:#1e1e1e;font-size:11.2px">Output</div>
<svg class="a" style="left:1189px;top:780px" width="12" height="12"><g fill="#cdcfda"><rect x="9" y="1" width="2" height="2"/><rect x="5" y="5" width="2" height="2"/><rect x="9" y="5" width="2" height="2"/><rect x="1" y="9" width="2" height="2"/><rect x="5" y="9" width="2" height="2"/><rect x="9" y="9" width="2" height="2"/></g></svg>

</body></html>
